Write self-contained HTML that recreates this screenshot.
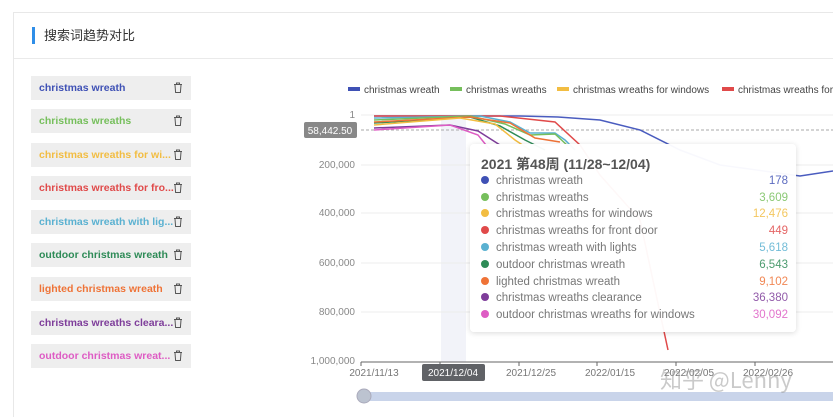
<!DOCTYPE html>
<html><head><meta charset="utf-8"><style>
html,body{margin:0;width:833px;height:417px;overflow:hidden}
body{background:#fff;font-family:"Liberation Sans","Noto Sans CJK SC",sans-serif;position:relative}
.card{position:absolute;left:13px;top:12px;width:830px;height:410px;border:1px solid #e8e8e8;border-bottom:none}
.bar{position:absolute;left:32px;top:27px;width:3px;height:17px;background:#2f8ee8}
.title{position:absolute;left:44px;top:27px;font-size:13px;color:#333;line-height:18px}
.sep{position:absolute;left:14px;top:58px;width:820px;height:1px;background:#eaeaea}
.item{position:absolute;left:31px;width:160px;height:24px;background:#eeeeee;font-size:10.5px;font-weight:bold;line-height:24px;text-indent:8px;white-space:nowrap}
.item svg{position:absolute;left:142px;top:6px}
.tt{position:absolute;left:470px;top:144px;width:326px;height:188px;background:rgba(255,255,255,.96);border-radius:4px;box-shadow:0 1px 6px rgba(0,0,0,.15)}
.tt .h{position:absolute;left:11px;top:10px;font-size:14px;font-weight:bold;color:#555}
.row{position:absolute;left:11px;width:307px;font-size:11.5px;color:#777;height:16px;line-height:16px}
.row i{display:inline-block;width:8px;height:8px;border-radius:50%;margin-right:7px;vertical-align:0}
.row b{position:absolute;right:0;font-weight:normal;opacity:.85}
</style></head><body>
<div class="card"></div>
<div class="bar"></div><div class="title">搜索词趋势对比</div>
<div class="sep"></div>

<div class="item" style="top:76px;color:#3f51b5">christmas wreath<svg width="10" height="12"><path d="M1 2.5h8M3.5 2.5V1h3v1.5M2 3l.6 7.5h4.8L8 3" fill="none" stroke="#555" stroke-width="1"/></svg></div>
<div class="item" style="top:109px;color:#76bf5c">christmas wreaths<svg width="10" height="12"><path d="M1 2.5h8M3.5 2.5V1h3v1.5M2 3l.6 7.5h4.8L8 3" fill="none" stroke="#555" stroke-width="1"/></svg></div>
<div class="item" style="top:143px;color:#f2bd42">christmas wreaths for wi...<svg width="10" height="12"><path d="M1 2.5h8M3.5 2.5V1h3v1.5M2 3l.6 7.5h4.8L8 3" fill="none" stroke="#555" stroke-width="1"/></svg></div>
<div class="item" style="top:176px;color:#e04a4a">christmas wreaths for fro...<svg width="10" height="12"><path d="M1 2.5h8M3.5 2.5V1h3v1.5M2 3l.6 7.5h4.8L8 3" fill="none" stroke="#555" stroke-width="1"/></svg></div>
<div class="item" style="top:210px;color:#5ab1d1">christmas wreath with lig...<svg width="10" height="12"><path d="M1 2.5h8M3.5 2.5V1h3v1.5M2 3l.6 7.5h4.8L8 3" fill="none" stroke="#555" stroke-width="1"/></svg></div>
<div class="item" style="top:243px;color:#2e8b57">outdoor christmas wreath<svg width="10" height="12"><path d="M1 2.5h8M3.5 2.5V1h3v1.5M2 3l.6 7.5h4.8L8 3" fill="none" stroke="#555" stroke-width="1"/></svg></div>
<div class="item" style="top:277px;color:#ef7337">lighted christmas wreath<svg width="10" height="12"><path d="M1 2.5h8M3.5 2.5V1h3v1.5M2 3l.6 7.5h4.8L8 3" fill="none" stroke="#555" stroke-width="1"/></svg></div>
<div class="item" style="top:311px;color:#7e3d9a">christmas wreaths cleara...<svg width="10" height="12"><path d="M1 2.5h8M3.5 2.5V1h3v1.5M2 3l.6 7.5h4.8L8 3" fill="none" stroke="#555" stroke-width="1"/></svg></div>
<div class="item" style="top:344px;color:#de5cc4">outdoor christmas wreat...<svg width="10" height="12"><path d="M1 2.5h8M3.5 2.5V1h3v1.5M2 3l.6 7.5h4.8L8 3" fill="none" stroke="#555" stroke-width="1"/></svg></div>

<svg style="position:absolute;left:0;top:0" width="833" height="417" font-family="Liberation Sans, sans-serif">
<g font-size="10" fill="#444">
<rect x="348" y="87" width="12" height="4" fill="#3f51b5"/><text x="364" y="93">christmas wreath</text>
<rect x="450" y="87" width="12" height="4" fill="#76bf5c"/><text x="466" y="93">christmas wreaths</text>
<rect x="557" y="87" width="12" height="4" fill="#f2bd42"/><text x="573" y="93">christmas wreaths for windows</text>
<rect x="722" y="87" width="12" height="4" fill="#e04a4a"/><text x="738" y="93">christmas wreaths for front door</text>
</g>
<rect x="441" y="115" width="25" height="247" fill="#f2f3f9"/>
<g stroke="#ececec"><path d="M361 115H833M361 165H833M361 213H833M361 263H833M361 312H833"/></g>
<path d="M361 130H833" stroke="#aaa" stroke-dasharray="3,2"/>
<g font-size="10" fill="#888" text-anchor="end">
<text x="355" y="118">1</text><text x="355" y="168">200,000</text><text x="355" y="216">400,000</text><text x="355" y="266">600,000</text><text x="355" y="315">800,000</text><text x="355" y="364">1,000,000</text>
</g>
<rect x="304" y="122" width="53" height="16" rx="2" fill="#888"/><text x="330" y="134" font-size="10" fill="#fff" text-anchor="middle">58,442.50</text>
<g fill="none" stroke-width="1.5">
<path d="M374 116L520 116L558 117L600 120L640 130L680 150L720 165L800 176L833 171" stroke="#4a5cbf"/>
<path d="M374 116L500 116L555 122L580 145L600 175L640 220L668 350" stroke="#e04a4a"/>
<path d="M374 118L480 116L510 122L530 133L555 133L565 140L575 150" stroke="#5ab1d1"/>
<path d="M374 120L470 116L505 124L530 135L555 134L568 146" stroke="#76bf5c"/>
<path d="M374 123L470 117L500 126L525 140L545 150" stroke="#2e8b57"/>
<path d="M374 122L470 117L510 123L535 138L560 142" stroke="#ef7337"/>
<path d="M374 125L460 118L495 124L515 140L530 150" stroke="#f2bd42"/>
<path d="M374 128L450 125L478 131L500 145" stroke="#7e3d9a"/>
<path d="M374 130L450 125L478 135L490 150" stroke="#de5cc4"/>
</g>
<path d="M361 362H833" stroke="#666"/>
<g stroke="#666"><path d="M361 362v4M440 362v4M519 362v4M597 362v4M676 362v4M755 362v4"/></g>
<rect x="422" y="364" width="63" height="17" rx="2" fill="#606266"/>
<g font-size="10" fill="#777" text-anchor="middle">
<text x="374" y="376">2021/11/13</text><text x="453" y="376" fill="#fff">2021/12/04</text><text x="531" y="376">2021/12/25</text><text x="610" y="376">2022/01/15</text><text x="689" y="376">2022/02/05</text><text x="768" y="376">2022/02/26</text>
</g>
<rect x="364" y="392" width="469" height="9" fill="#c9d4ea"/>
<circle cx="364" cy="396" r="7" fill="#bcc3d0" stroke="#aab"/>
<text x="660" y="388" font-size="22" fill="rgba(150,150,150,.5)" font-family="Noto Sans CJK SC, sans-serif">知乎 @Lenny</text>
</svg>

<div class="tt">
<div class="h">2021 第48周 (11/28~12/04)</div>
<div class="row" style="top:29px"><i style="background:#3f51b5"></i>christmas wreath<b style="color:#3f51b5">178</b></div>
<div class="row" style="top:46px"><i style="background:#76bf5c"></i>christmas wreaths<b style="color:#76bf5c">3,609</b></div>
<div class="row" style="top:62px"><i style="background:#f2bd42"></i>christmas wreaths for windows<b style="color:#f2bd42">12,476</b></div>
<div class="row" style="top:79px"><i style="background:#e04a4a"></i>christmas wreaths for front door<b style="color:#e04a4a">449</b></div>
<div class="row" style="top:96px"><i style="background:#5ab1d1"></i>christmas wreath with lights<b style="color:#5ab1d1">5,618</b></div>
<div class="row" style="top:113px"><i style="background:#2e8b57"></i>outdoor christmas wreath<b style="color:#2e8b57">6,543</b></div>
<div class="row" style="top:130px"><i style="background:#ef7337"></i>lighted christmas wreath<b style="color:#ef7337">9,102</b></div>
<div class="row" style="top:146px"><i style="background:#7e3d9a"></i>christmas wreaths clearance<b style="color:#7e3d9a">36,380</b></div>
<div class="row" style="top:163px"><i style="background:#de5cc4"></i>outdoor christmas wreaths for windows<b style="color:#de5cc4">30,092</b></div>
</div>
</body></html>
